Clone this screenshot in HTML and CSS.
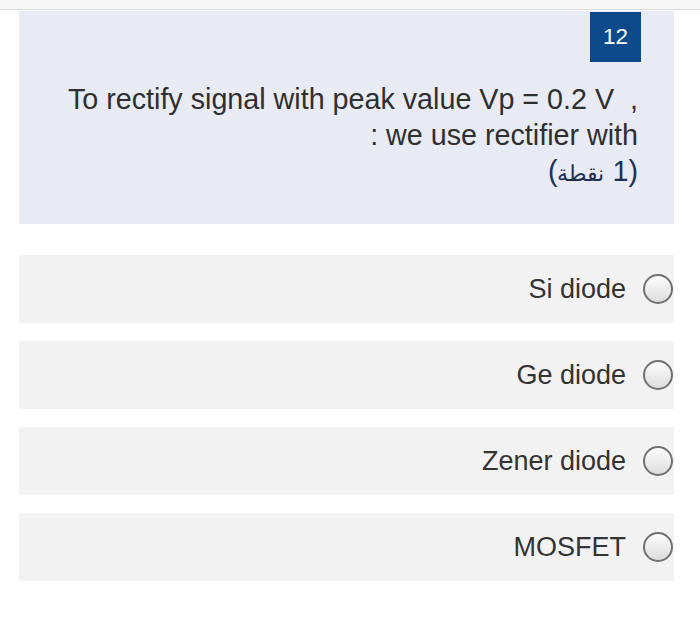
FILE: index.html
```html
<!DOCTYPE html>
<html>
<head>
  <link rel="stylesheet" href="styles.css">
</head>
<body>
  <div class="topbar"></div>

  <!-- Question -->
  <div class="question">
    <div class="badge">12</div>
    <div class="question-text">
      <p>To rectify signal with peak value Vp = 0.2 V&nbsp;&nbsp;,</p>
      <p>: we use rectifier with</p>
      <p class="points" dir="rtl">(1 <span class="points-word">نقطة</span>)</p>
    </div>
  </div>

  <!-- Answers -->
  <div class="options">
    <label class="option">
      <span class="option-label">Si diode</span>
      <span class="radio"></span>
    </label>
    <label class="option">
      <span class="option-label">Ge diode</span>
      <span class="radio"></span>
    </label>
    <label class="option">
      <span class="option-label">Zener diode</span>
      <span class="radio"></span>
    </label>
    <label class="option">
      <span class="option-label">MOSFET</span>
      <span class="radio"></span>
    </label>
  </div>
</body>
</html>
```

FILE: styles.css
```css
* {
  margin: 0;
  padding: 0;
  box-sizing: border-box;
}

body {
  width: 700px;
  height: 639px;
  background: #fff;
  font-family: "Liberation Sans", Arial, "Noto Sans", sans-serif;
  color: #333;
}

.topbar {
  height: 10px;
  background: #f7f7f7;
  border-bottom: 1px solid #dcdcdc;
}

/* Question card */
.question {
  margin: 1px 26px 0 19px;
  height: 213px;
  background: #e8ebf4;
  display: flex;
  flex-direction: column;
  align-items: flex-end;
}

.badge {
  width: 51px;
  height: 50px;
  margin-top: 1px;
  margin-right: 33px;
  background: #0c4a8c;
  color: #fff;
  font-size: 22.5px;
  display: flex;
  align-items: center;
  justify-content: center;
}

.question-text {
  margin-top: 19px;
  padding-right: 36px;
  text-align: right;
  font-size: 28.7px;
  line-height: 36px;
  color: #2f2f2f;
}

.question-text .points {
  text-align: right;
  color: #1e2f52;
}

.points-word {
  font-size: 22px;
}

/* Options */
.options {
  margin: 31px 26px 0 19px;
  display: flex;
  flex-direction: column;
  gap: 18px;
}

.option {
  height: 68px;
  background: #f2f2f2;
  display: flex;
  align-items: center;
  justify-content: flex-end;
  gap: 17px;
  padding-right: 1px;
  font-size: 27px;
  color: #333;
}

.radio {
  width: 30px;
  height: 30px;
  border-radius: 50%;
  border: 2px solid #707070;
  background: linear-gradient(#fdfdfd, #dcdcdc);
}
```
